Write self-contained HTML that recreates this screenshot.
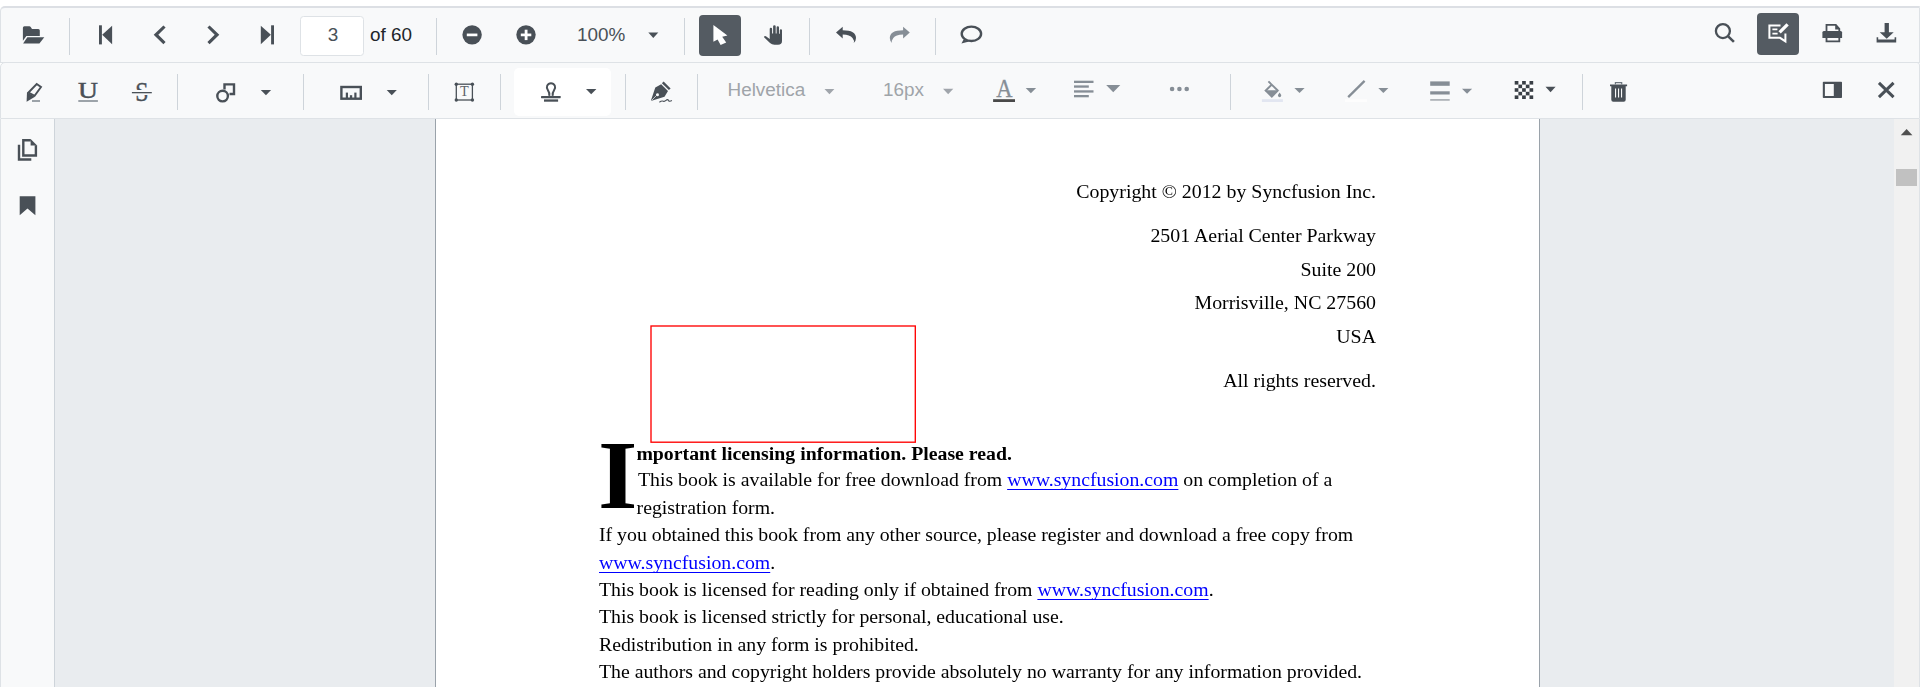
<!DOCTYPE html>
<html lang="en">
<head>
<meta charset="utf-8">
<title>PDF Viewer</title>
<style>
html,body{margin:0;padding:0;background:#fff;}
body{width:1920px;height:687px;position:relative;overflow:hidden;font-family:"Liberation Sans",Arial,sans-serif;}
.abs{position:absolute;}
.tb{position:absolute;left:0;width:1920px;height:57px;box-sizing:border-box;background:#f8f9fa;border:1px solid #dee2e6;border-radius:5px 5px 0 0;}
#tb1{top:6px;border-radius:5px 0 0 0;border-top:2px solid #dcdfe4;}
#tb2{top:62px;border-radius:5px 3px 0 0;}
.sep{position:absolute;width:1px;background:#ced4da;}
.ui{position:absolute;font-size:18.9px;line-height:22px;white-space:nowrap;color:#495057;}
.dis{color:#9fa4a9;}
#side{position:absolute;left:0;top:119px;width:55px;height:568px;box-sizing:border-box;background:#f8f9fa;border-left:1px solid #dee2e6;border-right:1px solid #ced4da;}
#view{position:absolute;left:55px;top:119px;width:1839px;height:568px;background:#e9ecef;}
#page{position:absolute;left:435px;top:118px;width:1105px;height:580px;box-sizing:border-box;background:#fff;border:1px solid #9aa2aa;}
#sbar{position:absolute;left:1894px;top:119px;width:26px;height:568px;background:#f1f1f1;border-right:1px solid #dee2e6;box-sizing:border-box;}
#thumb{position:absolute;left:1896px;top:169px;width:21px;height:17px;background:#c1c1c1;}
.pt{position:absolute;font-family:"Liberation Serif","Times New Roman",serif;font-size:19.88px;line-height:24px;white-space:nowrap;color:#000;}
.pt a{color:#0000ff;text-decoration:underline;text-decoration-skip-ink:none;text-underline-offset:2.5px;text-decoration-thickness:1.3px;}
.r{text-align:right;right:544px;}
.b{font-size:19.79px;}
#icons{position:absolute;left:0;top:0;width:1920px;height:240px;}
</style>
</head>
<body>
<div id="side"></div>
<div id="view"></div>
<div id="page"></div>
<div id="sbar"></div>
<div id="thumb"></div>
<div class="tb" id="tb1"></div>
<div class="tb" id="tb2"></div>
<div class="sep" style="left:69px;top:18px;height:37px"></div>
<div class="sep" style="left:436px;top:18px;height:37px"></div>
<div class="sep" style="left:684px;top:18px;height:37px"></div>
<div class="sep" style="left:809px;top:18px;height:37px"></div>
<div class="sep" style="left:935px;top:18px;height:37px"></div>
<div class="sep" style="left:177px;top:74px;height:36px"></div>
<div class="sep" style="left:303px;top:74px;height:36px"></div>
<div class="sep" style="left:428px;top:74px;height:36px"></div>
<div class="sep" style="left:500px;top:74px;height:36px"></div>
<div class="sep" style="left:625px;top:74px;height:36px"></div>
<div class="sep" style="left:697px;top:74px;height:36px"></div>
<div class="sep" style="left:1230px;top:74px;height:36px"></div>
<div class="sep" style="left:1582px;top:74px;height:36px"></div>

<div class="abs" style="left:300px;top:16px;width:64px;height:40px;box-sizing:border-box;background:#fff;border:1px solid #dee2e6;border-radius:3.5px;"></div>
<div class="ui" style="left:301px;top:24px;width:64px;text-align:center;">3</div>
<div class="ui" style="left:370px;top:24px;color:#212529;">of 60</div>
<div class="ui" style="left:577px;top:24px;">100%</div>
<div class="abs" style="left:699px;top:15px;width:42px;height:41px;background:#545b62;border-radius:4px;"></div>
<div class="abs" style="left:1757px;top:13px;width:42px;height:42px;background:#545b62;border-radius:4px;"></div>
<div class="abs" style="left:514px;top:68px;width:97px;height:48px;background:#fff;border-radius:5px;"></div>
<div class="ui dis" style="left:727.5px;top:79px;">Helvetica</div>
<div class="ui dis" style="left:883px;top:79px;">16px</div>

<!--ICONS_START-->
<svg id="icons" width="1920" height="240" viewBox="0 0 1920 240">
<g fill="#495057" stroke="none">
<!-- open folder -->
<path d="M22.9 27.8Q22.9 26.3 24.4 26.3L29.4 26.3Q30.2 26.3 30.7 27L32 29L38.3 29Q39.8 29 39.8 30.5L39.8 36L26.4 36L22.9 40.8Z"/>
<path d="M27.3 37.2L44.3 37.2L39.4 43.5L23.1 43.5Z"/>
<!-- first page -->
<rect x="99" y="25.3" width="2.9" height="19.1"/>
<path d="M112.1 25.7L112.1 44.2L102.2 34.85Z"/>
<!-- prev -->
<path d="M153.7 34.85L163.4 25.4L165.6 27.6L158.3 34.85L165.6 42.1L163.4 44.3Z"/>
<!-- next -->
<path d="M219.3 34.85L209.6 25.4L207.4 27.6L214.7 34.85L207.4 42.1L209.6 44.3Z"/>
<!-- last page -->
<rect x="271.1" y="25.3" width="2.9" height="19.1"/>
<path d="M260.8 25.7L260.8 44.2L270.9 34.85Z"/>
<!-- zoom out / in -->
<circle cx="472.1" cy="34.85" r="9.7"/>
<circle cx="526" cy="34.85" r="9.7"/>
<!-- zoom caret -->
<path d="M648.3 32.6L658.3 32.6L653.3 38Z"/>
<!-- hand -->
<path d="M769.7 35.6L769.7 29Q769.7 27.8 770.9 27.8Q772.1 27.8 772.1 29L772.1 33.5L773.1 33.5L773.1 26.6Q773.1 25.3 774.4 25.3Q775.7 25.3 775.7 26.6L775.7 33.5L776.6 33.5L776.6 27.5Q776.6 26.3 777.8 26.3Q779 26.3 779 27.5L779 33.8L779.8 33.8L779.8 30.3Q779.8 29.2 780.9 29.2Q782 29.2 782 30.3L782 41Q782 44.8 778 44.8L774.5 44.8Q771.8 44.8 770 43L764.3 37.6Q763.6 36.8 764.4 36.2Q765.3 35.6 766.3 36.4L769.7 39Z"/>
<!-- undo -->
<path d="M836 32.5L842.7 26.7L842.7 30.2Q856 30.2 856 38Q856 41 853.7 43.1Q854.6 40.5 852.5 38Q850 34.4 842.7 34.4L842.7 38.5Z"/>
<!-- search -->
<path d="M1722.9 22.9A8.15 8.15 0 1 0 1722.9 39.2A8.15 8.15 0 1 0 1722.9 22.9ZM1722.9 25.2A5.85 5.85 0 1 1 1722.9 36.9A5.85 5.85 0 1 1 1722.9 25.2Z"/>
<path d="M1727.3 37.2L1729.1 35.4L1734.8 41L1733 42.8Z"/>
<!-- print -->
<path d="M1825.6 24L1836.2 24L1840.2 28.4L1840.2 31L1838.4 31L1838.4 29.4L1835.2 29.4L1835.2 25.8L1827.4 25.8L1827.4 31L1825.6 31Z"/>
<path d="M1823.8 30.9L1840.6 30.9Q1842.1 30.9 1842.1 32.4L1842.1 38L1822.4 38L1822.4 32.4Q1822.4 30.9 1823.8 30.9Z"/>
<path d="M1825.6 38L1827.4 38L1827.4 40.4L1838.4 40.4L1838.4 38L1840.2 38L1840.2 42.2L1825.6 42.2Z"/>
<!-- download -->
<path d="M1884.6 22.9L1888.9 22.9L1888.9 32.3L1893.7 32.3L1886.7 38.8L1879.7 32.3L1884.6 32.3Z"/>
<path d="M1876.6 37.2L1878.2 37.2L1878.2 39.6L1894.6 39.6L1894.6 37.2L1896.2 37.2L1896.2 42.4L1876.6 42.4Z"/>
<!-- highlight pen tip -->
<path d="M27 92.3L35 96.7L26.6 101.7Z"/>
<!-- shape caret, measure caret, stamp caret -->
<path d="M260.8 90L271.1 90L265.95 95.2Z"/>
<path d="M386.7 90L396.8 90L391.75 95.2Z"/>
<path d="M586 88.9L596.4 88.9L591.2 94.2Z"/>
<path d="M1545.5 86.8L1555.6 86.8L1550.55 92.2Z"/>
<!-- measure ticks -->
<rect x="345.8" y="92.6" width="2.2" height="6"/>
<rect x="349.9" y="95.2" width="2.3" height="3.5"/>
<rect x="354.3" y="92.6" width="2.2" height="6"/>
<!-- textbox dots -->
<circle cx="456.3" cy="84.2" r="1.7"/><circle cx="472.4" cy="84.2" r="1.7"/><circle cx="456.3" cy="100" r="1.7"/><circle cx="472.4" cy="100" r="1.7"/>
<!-- stamp base -->
<rect x="541" y="95.9" width="19.7" height="2.3" rx=".6"/>
<rect x="544" y="99.4" width="14.1" height="2.3"/>
<!-- signature pen -->
<path d="M663.6 81.6L670.6 88.4L668.9 90.1L661.9 83.3Z"/>
<path d="M661.2 84.3L668 91L664.5 96.8L651.6 100.8L651 100.3L655.3 87.6ZM657.4 93.2A1.5 1.5 0 1 0 657.5 96.2A1.5 1.5 0 1 0 657.4 93.2Z" fill-rule="evenodd"/>
<path d="M656.6 95.4L651.6 100.4" stroke="#f8f9fa" stroke-width=".7" fill="none"/>
<!-- trash -->
<path d="M1610 84.6L1627.1 84.6L1627.1 86.2L1625.7 86.2L1625.7 99.7Q1625.7 101.7 1623.7 101.7L1613.3 101.7Q1611.3 101.7 1611.3 99.7L1611.3 86.2L1610 86.2ZM1615 88.5L1615 97.6L1616.1 97.6L1616.1 88.5ZM1618 88.5L1618 97.6L1619.1 97.6L1619.1 88.5ZM1621 88.5L1621 97.6L1622.1 97.6L1622.1 88.5Z" fill-rule="evenodd"/>
<!-- panel -->
<path d="M1823.6 81.8L1841.2 81.8Q1842 81.8 1842 82.6L1842 97.3Q1842 98.1 1841.2 98.1L1823.6 98.1Q1822.8 98.1 1822.8 97.3L1822.8 82.6Q1822.8 81.8 1823.6 81.8ZM1824.9 84L1824.9 96L1833.8 96L1833.8 84Z" fill-rule="evenodd"/>
<!-- close -->
<path d="M1878.95 82.85L1893.55 97.15M1893.55 82.85L1878.95 97.15" fill="none" stroke="#495057" stroke-width="3"/>
<!-- sidebar: thumbnail corner, bookmark -->
<path d="M30.6 139.1L37.1 145.4L30.6 145.4Z"/>
<path d="M19.7 196.3L35.4 196.3L35.4 215.2L27.5 208.6L19.7 215.2Z"/>
<!-- checker --><rect x="1514.7" y="81" width="18.5" height="18" fill="#fff"/>
<g id="chk" fill="#3a4046">
<rect x="1514.7" y="81" width="3.7" height="3.6"/><rect x="1522.1" y="81" width="3.7" height="3.6"/><rect x="1529.5" y="81" width="3.7" height="3.6"/>
<rect x="1518.4" y="84.6" width="3.7" height="3.6"/><rect x="1525.8" y="84.6" width="3.7" height="3.6"/>
<rect x="1514.7" y="88.2" width="3.7" height="3.6"/><rect x="1522.1" y="88.2" width="3.7" height="3.6"/><rect x="1529.5" y="88.2" width="3.7" height="3.6"/>
<rect x="1518.4" y="91.8" width="3.7" height="3.6"/><rect x="1525.8" y="91.8" width="3.7" height="3.6"/>
<rect x="1514.7" y="95.4" width="3.7" height="3.6"/><rect x="1522.1" y="95.4" width="3.7" height="3.6"/><rect x="1529.5" y="95.4" width="3.7" height="3.6"/>
</g>
</g>
<g fill="#fff">
<rect x="466.8" y="33.55" width="10.6" height="2.7"/>
<rect x="520.8" y="33.55" width="10.5" height="2.7"/>
<rect x="524.7" y="29.7" width="2.8" height="10.4"/>
<!-- pointer -->
<path d="M713.4 25L727.4 35.4L722.2 36.8L726.2 42.4L720.6 45L717.6 39.6L713.4 41.8Z"/>
</g>
<!-- annotation edit (white on dark) -->
<g fill="none" stroke="#fff" stroke-width="2">
<path d="M1780.5 25.4L1769.4 25.4L1769.4 37.8L1780 37.8L1785.4 41.4L1785.4 33.6"/>
<path d="M1772.4 29.3L1777.4 29.3M1772.4 33.6L1777.6 33.6" stroke-width="1.7"/>
<path d="M1779.6 32.3L1787.6 24.3" stroke-width="3.2"/>
</g>
<!-- stroked dark icons -->
<g fill="none" stroke="#495057">
<!-- comment -->
<ellipse cx="971.4" cy="33.8" rx="9.7" ry="7.2" stroke-width="2.4"/>
<!-- highlighter body -->
<path d="M28.5 92.5L36.7 84L41 87L34.6 95.8Z" stroke-width="1.9" stroke-linejoin="miter"/>
<!-- shapes -->
<path d="M224.5 89.5L224.5 84.4L234 84.4L234 94L229.5 94" stroke-width="2.4"/>
<circle cx="222.6" cy="96.1" r="5.3" stroke-width="2.4"/>
<!-- measure -->
<rect x="341.4" y="87" width="19.4" height="11.7" stroke-width="2.4"/>
<!-- textbox -->
<rect x="456.3" y="84.2" width="16.1" height="15.8" stroke-width="1.3"/>
<!-- stamp loop -->
<path d="M549.3 95.9Q549.8 92.8 548 90.3Q546.2 87.8 547.2 85.6Q548.4 83.2 551 83.2Q553.6 83.2 554.8 85.6Q555.8 87.8 554 90.3Q552.2 92.8 552.7 95.9" stroke-width="2"/>
<!-- signature squiggle -->
<path d="M659.4 102.2Q661.5 100.6 663.3 101.2Q664.6 101.8 666 100.4Q667.6 98.8 668.6 100.6Q669.4 101.9 671.9 100.6" stroke-width="1.1"/>
<!-- thumbnail -->
<path d="M30.8 140.3L23.3 140.3L23.3 155.5L35.9 155.5L35.9 145.2" stroke-width="2.4"/>
<path d="M19 144.7L19 159.5L31.3 159.5" stroke-width="2.4"/>
<!-- trash handle -->
<path d="M1615.4 84.6L1615.4 82.7L1621.7 82.7L1621.7 84.6" stroke-width="1.2" stroke="#6c757d"/>
</g>
<path d="M963.6 39.4L961.4 43.6L969.2 41.6Z" fill="#495057"/>
<!-- disabled / gray icons -->
<g fill="#868e96">
<!-- redo -->
<path d="M909.8 32.5L903.1 26.7L903.1 30.2Q889.8 30.2 889.8 38Q889.8 41 892.1 43.1Q891.2 40.5 893.3 38Q895.8 34.4 903.1 34.4L903.1 38.5Z"/>
<rect x="32" y="100.2" width="8" height="1.6"/>
<rect x="78.3" y="100.2" width="19.6" height="1.6"/>
<rect x="131.9" y="92" width="19.9" height="1.3" fill="#495057"/>
<!-- font color caret -->
<path d="M1025.7 88L1036.1 88L1030.9 93.2Z"/>
<!-- align -->
<rect x="1074" y="80.7" width="19.5" height="2.3"/><rect x="1074" y="85.4" width="14.8" height="2.3"/><rect x="1074" y="90.3" width="19.5" height="2.3"/><rect x="1074" y="95" width="14.8" height="2.3"/>
<path d="M1106.2 85L1120.3 85L1113.25 92.3Z"/>
<circle cx="1172.1" cy="89" r="2.3"/><circle cx="1179.4" cy="89" r="2.3"/><circle cx="1186.7" cy="89" r="2.3"/>
<!-- bucket -->
<path d="M1264.1 90.2L1279.4 90.2L1271.8 97.9Z"/>
<path d="M1279.6 92.6Q1281.4 95 1281.2 95.8Q1281 97.2 1279.6 97.2Q1278.2 97.2 1278 95.8Q1277.8 95 1279.6 92.6Z"/>
<path d="M1294.4 88L1304.6 88L1299.5 93Z"/>
<path d="M1378.3 88L1388.4 88L1383.35 93Z"/>
<!-- thickness -->
<rect x="1430.2" y="81.4" width="19.5" height="4.4"/><rect x="1430.2" y="91.3" width="19.5" height="3.2"/><rect x="1430.2" y="99" width="19.5" height="1.8" fill="#aeb3b8"/>
<path d="M1462 88.8L1472.1 88.8L1467.05 93.8Z"/>
</g>
<g fill="none" stroke="#868e96">
<path d="M1268.4 81.4L1278 90.8M1271.6 84.8L1265.3 91" stroke-width="1.9"/>
<path d="M1348.2 97.1L1364.6 80.9" stroke-width="2.3"/>
</g>
<g fill="#a0a5ab">
<path d="M824.5 89L834.4 89L829.45 94.2Z"/>
<path d="M943 88.8L953.3 88.8L948.15 94.2Z"/>
</g>
<rect x="993.1" y="99.2" width="21.9" height="2.8" fill="#494949"/>
<rect x="1261.9" y="99.2" width="21" height="2.8" fill="#e2e6f1"/>
<rect x="1345" y="99.2" width="22" height="2.8" fill="#fdfdfd"/>
<!-- glyph icons as text -->
<g font-family="'Liberation Serif',serif" fill="#495057">
<text x="88.1" y="98.3" font-size="23.6" text-anchor="middle" stroke="#495057" stroke-width=".5" transform="translate(88.1 0) scale(1.17 1) translate(-88.1 0)">U</text>
<text x="464.35" y="96.1" font-size="14.3" text-anchor="middle" fill="#5c636a">T</text>
<text x="1004.4" y="97.1" font-size="25" text-anchor="middle" fill="#868e96" stroke="#868e96" stroke-width=".3" transform="translate(1004.4 0) scale(.9 1) translate(-1004.4 0)">A</text>
</g>
<!-- strikethrough S, cut in the middle -->
<defs><clipPath id="sclip"><rect x="125" y="78" width="35" height="11.9"/><rect x="125" y="95" width="35" height="10"/></clipPath></defs>
<g clip-path="url(#sclip)"><text x="141.9" y="101" font-family="'Liberation Serif',serif" font-size="28" fill="#495057" stroke="#495057" stroke-width=".45" text-anchor="middle" transform="translate(141.9 0) scale(.85 1) translate(-141.9 0)">S</text></g>
<!-- scrollbar arrow -->
<path d="M1900.8 135.2L1912.4 135.2L1906.6 129Z" fill="#505050"/>
</svg>

<!--ICONS_END-->
<div id="ptext" style="position:absolute;left:0;top:0;width:1920px;height:687px;will-change:transform;">
<div class="pt r" style="top:179px;">Copyright © 2012 by Syncfusion Inc.</div>
<div class="pt r" style="top:223px;">2501 Aerial Center Parkway</div>
<div class="pt r" style="top:257px;">Suite 200</div>
<div class="pt r" style="top:290px;">Morrisville, NC 27560</div>
<div class="pt r" style="top:324px;">USA</div>
<div class="pt r" style="top:368px;">All rights reserved.</div>
<svg class="abs" style="left:640px;top:316px;" width="290" height="140" viewBox="640 316 290 140"><rect x="651" y="326" width="264.3" height="116.2" fill="none" stroke="#ff0000" stroke-width="1.35"/></svg>
<div class="pt" id="dropcap" style="left:598.1px;top:425px;font-size:97.4px;line-height:100px;font-weight:bold;transform:scaleX(1.04);transform-origin:0 0;">I</div>
<div class="pt b" style="left:636.4px;top:441px;font-weight:bold;">mportant licensing information. Please read.</div>
<div class="pt b" style="left:638px;top:467px;">This book is available for free download from <a>www.syncfusion.com</a> on completion of a</div>
<div class="pt b" style="left:636.6px;top:495px;">registration form.</div>
<div class="pt b" style="left:599px;top:522px;">If you obtained this book from any other source, please register and download a free copy from</div>
<div class="pt b" style="left:599px;top:550px;"><a>www.syncfusion.com</a>.</div>
<div class="pt b" style="left:599px;top:577px;">This book is licensed for reading only if obtained from <a>www.syncfusion.com</a>.</div>
<div class="pt b" style="left:599px;top:604px;">This book is licensed strictly for personal, educational use.</div>
<div class="pt b" style="left:599px;top:632px;">Redistribution in any form is prohibited.</div>
<div class="pt b" style="left:599px;top:659px;">The authors and copyright holders provide absolutely no warranty for any information provided.</div>

</div>
</body>
</html>
